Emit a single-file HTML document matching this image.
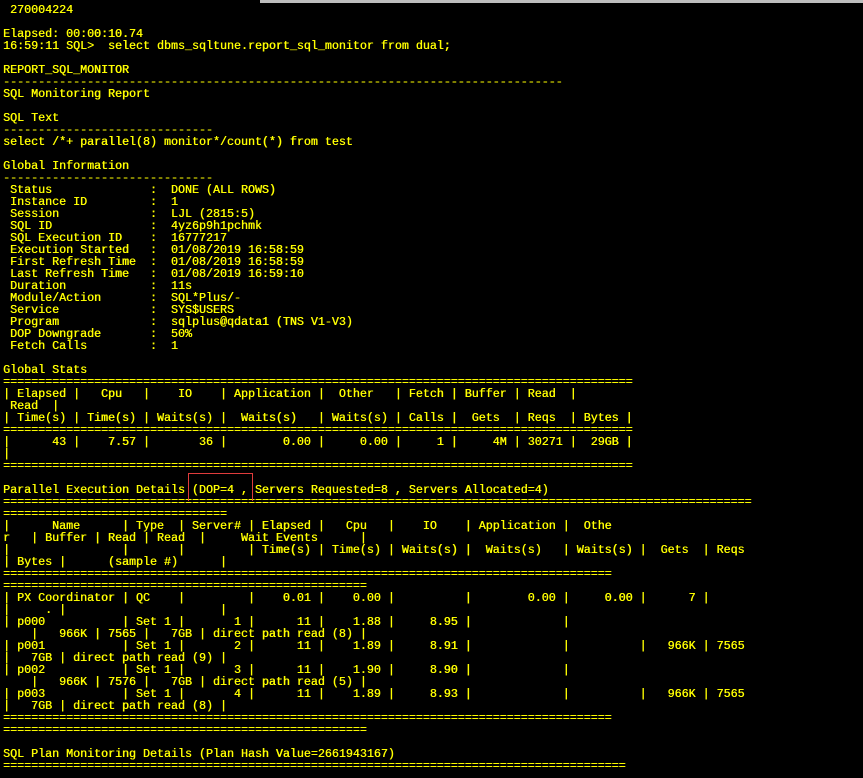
<!DOCTYPE html>
<html><head><meta charset="utf-8"><style>
html,body{margin:0;padding:0;background:#000;width:863px;height:778px;overflow:hidden;position:relative}
pre{margin:0;position:absolute;left:3px;top:4px;font-family:"Liberation Mono",monospace;font-size:11.67px;line-height:12px;color:#ffff00;white-space:pre;text-shadow:0.4px 0 0 #ffff00}
#bar{position:absolute;left:260px;top:0;width:603px;height:3px;background:#bdbdbd}
#box{position:absolute;left:188px;top:473px;width:63px;height:27px;border:1px solid #e03c3c;border-bottom:none}
</style></head><body>
<div id="bar"></div>
<pre> 270004224

Elapsed: 00:00:10.74
16:59:11 SQL>  select dbms_sqltune.report_sql_monitor from dual;

REPORT_SQL_MONITOR
--------------------------------------------------------------------------------
SQL Monitoring Report

SQL Text
------------------------------
select /*+ parallel(8) monitor*/count(*) from test

Global Information
------------------------------
 Status              :  DONE (ALL ROWS)
 Instance ID         :  1
 Session             :  LJL (2815:5)
 SQL ID              :  4yz6p9h1pchmk
 SQL Execution ID    :  16777217
 Execution Started   :  01/08/2019 16:58:59
 First Refresh Time  :  01/08/2019 16:58:59
 Last Refresh Time   :  01/08/2019 16:59:10
 Duration            :  11s
 Module/Action       :  SQL*Plus/-
 Service             :  SYS$USERS
 Program             :  sqlplus@qdata1 (TNS V1-V3)
 DOP Downgrade       :  50%
 Fetch Calls         :  1

Global Stats
==========================================================================================
| Elapsed |   Cpu   |    IO    | Application |  Other   | Fetch | Buffer | Read  |
 Read  |
| Time(s) | Time(s) | Waits(s) |  Waits(s)   | Waits(s) | Calls |  Gets  | Reqs  | Bytes |
==========================================================================================
|      43 |    7.57 |       36 |        0.00 |     0.00 |     1 |     4M | 30271 |  29GB |
|
==========================================================================================

Parallel Execution Details (DOP=4 , Servers Requested=8 , Servers Allocated=4)
===========================================================================================================
================================
|      Name      | Type  | Server# | Elapsed |   Cpu   |    IO    | Application |  Othe
r   | Buffer | Read | Read  |     Wait Events      |
|                |       |         | Time(s) | Time(s) | Waits(s) |  Waits(s)   | Waits(s) |  Gets  | Reqs
| Bytes |      (sample #)      |
=======================================================================================
====================================================
| PX Coordinator | QC    |         |    0.01 |    0.00 |          |        0.00 |     0.00 |      7 |
|     . |                      |
| p000           | Set 1 |       1 |      11 |    1.88 |     8.95 |             |
    |   966K | 7565 |   7GB | direct path read (8) |
| p001           | Set 1 |       2 |      11 |    1.89 |     8.91 |             |          |   966K | 7565
|   7GB | direct path read (9) |
| p002           | Set 1 |       3 |      11 |    1.90 |     8.90 |             |
    |   966K | 7576 |   7GB | direct path read (5) |
| p003           | Set 1 |       4 |      11 |    1.89 |     8.93 |             |          |   966K | 7565
|   7GB | direct path read (8) |
=======================================================================================
====================================================

SQL Plan Monitoring Details (Plan Hash Value=2661943167)
=========================================================================================</pre>
<div id="box"></div>
</body></html>
